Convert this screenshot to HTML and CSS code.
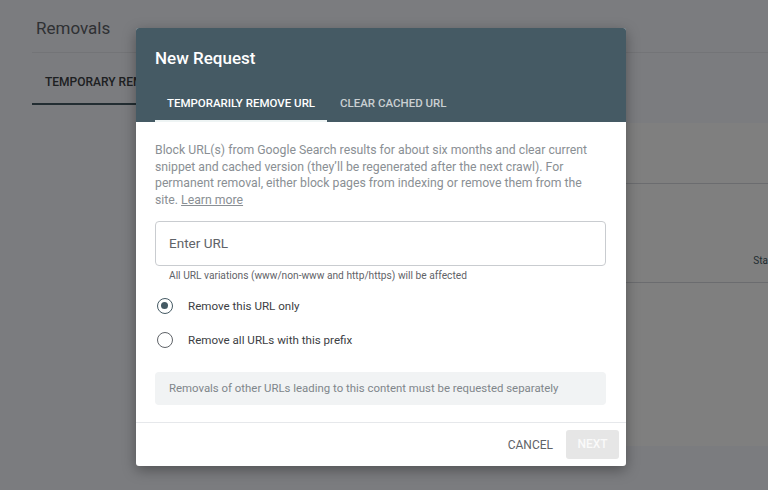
FILE: index.html
```html
<!DOCTYPE html>
<html>
<head>
<meta charset="utf-8">
<link rel="stylesheet" href="styles.css">
</head>
<body>
<div class="page">
  <div class="page-head">Removals</div>
  <div class="page-tabs">
    <div class="page-tab">TEMPORARY REMOVALS</div>
  </div>
  <div class="page-card">
    <div class="card-top"></div>
    <div class="card-row"><span class="card-cell">Sta</span></div>
    <div class="card-rest"></div>
  </div>
</div>
<div class="overlay"></div>
<div class="dialog">
  <div class="dialog-head">
    <div class="dialog-title">New Request</div>
    <div class="dialog-tabs">
      <div class="dtab active">TEMPORARILY REMOVE URL</div>
      <div class="dtab">CLEAR CACHED URL</div>
    </div>
  </div>
  <div class="dialog-body">
    <p class="desc">Block URL(s) from Google Search results for about six months and clear current snippet and cached version (they’ll be regenerated after the next crawl). For permanent removal, either block pages from indexing or remove them from the site. <span class="link">Learn more</span></p>
    <div class="input">Enter URL</div>
    <div class="helper">All URL variations (www/non-www and http/https) will be affected</div>
    <div class="radios">
      <div class="radio-row"><span class="radio checked"></span><span class="radio-label">Remove this URL only</span></div>
      <div class="radio-row"><span class="radio"></span><span class="radio-label">Remove all URLs with this prefix</span></div>
    </div>
    <div class="note">Removals of other URLs leading to this content must be requested separately</div>
  </div>
  <div class="dialog-foot">
    <span class="btn-text">CANCEL</span>
    <span class="btn-next">NEXT</span>
  </div>
</div>
</body>
</html>
```
FILE: styles.css
```css
html, body {
  margin: 0;
  padding: 0;
  width: 768px;
  height: 490px;
  overflow: hidden;
  font-family: Roboto, "Liberation Sans", sans-serif;
}
body {
  background: #f6f8ff;
  position: relative;
}
.page {
  height: 490px;
}
.page-head {
  height: 53px;
  box-sizing: border-box;
  padding: 18px 0 0 4px;
  margin-left: 32px;
  font-size: 17px;
  color: #5f6368;
  border-bottom: 1px solid #e6e8ee;
}
.page-tabs {
  display: flex;
  margin-left: 32px;
  height: 52px;
}
.page-tab {
  width: 104px;
  padding: 6px 0 0 13px;
  box-sizing: border-box;
  white-space: nowrap;
  font-size: 12px;
  font-weight: 500;
  color: #3c4043;
  line-height: 46px;
  border-bottom: 2px solid #455a64;
}
.page-card {
  margin: 18px 0 0 160px;
  background: #fff;
  height: 323px;
}
.card-top {
  height: 60px;
  border-bottom: 1px solid #d6d9de;
}
.card-row {
  height: 98px;
  border-bottom: 1px solid #d6d9de;
  display: flex;
  justify-content: flex-end;
  align-items: flex-end;
}
.card-cell {
  font-size: 10px;
  color: #455a64;
  margin: 0 0 16px 0;
}
.overlay {
  position: absolute;
  inset: 0;
  background: rgba(0, 0, 0, 0.5);
}
.dialog {
  position: absolute;
  left: 136px;
  top: 28px;
  width: 490px;
  height: 438px;
  background: #fff;
  border-radius: 3px;
  box-shadow: 0 4px 14px rgba(0, 0, 0, 0.35);
  overflow: hidden;
  display: flex;
  flex-direction: column;
}
.dialog-head {
  background: #455a64;
  height: 94px;
  padding: 0 19px;
  box-sizing: border-box;
}
.dialog-title {
  padding-top: 20px;
  height: 46px;
  box-sizing: border-box;
  font-size: 17px;
  font-weight: 500;
  color: #fff;
  line-height: 20px;
}
.dialog-tabs {
  display: flex;
  height: 48px;
}
.dtab {
  height: 48px;
  line-height: 58px;
  box-sizing: border-box;
  padding: 0 13px;
  font-size: 11.5px;
  font-weight: 500;
  color: rgba(255, 255, 255, 0.72);
}
.dtab.active {
  color: #fff;
  border-bottom: 2px solid #eef4f4;
  width: 172px;
  text-align: center;
  padding: 0;
}
.dialog-body {
  padding: 20px 20px 0 19px;
  flex: 1;
  border-bottom: 1px solid #e6e8eb;
}
.desc {
  margin: 0;
  font-size: 12.25px;
  line-height: 16.5px;
  color: #8a8f94;
}
.link {
  text-decoration: underline;
}
.input {
  margin-top: 13px;
  height: 45px;
  box-sizing: border-box;
  border: 1px solid #c9ccd0;
  border-radius: 4px;
  padding-left: 13px;
  line-height: 43px;
  font-size: 13.5px;
  color: #5f6368;
}
.helper {
  margin: 3px 0 0 14px;
  font-size: 10.2px;
  line-height: 14px;
  color: #5f6368;
}
.radios {
  margin-top: 6px;
}
.radio-row {
  height: 34px;
  display: flex;
  align-items: center;
}
.radio {
  width: 16px;
  height: 16px;
  box-sizing: border-box;
  border: 1.5px solid #5f6368;
  border-radius: 50%;
  margin-left: 2px;
  position: relative;
}
.radio.checked {
  border-color: #455a64;
}
.radio.checked::after {
  content: "";
  position: absolute;
  left: 3px;
  top: 3px;
  width: 7px;
  height: 7px;
  border-radius: 50%;
  background: #455a64;
}
.radio-label {
  margin-left: 15px;
  font-size: 11.6px;
  color: #3c4043;
}
.note {
  margin-top: 15px;
  height: 33px;
  background: #f1f3f4;
  border-radius: 4px;
  padding-left: 14px;
  line-height: 33px;
  font-size: 11.4px;
  color: #80868b;
}
.dialog-foot {
  height: 43px;
  display: flex;
  justify-content: flex-end;
  align-items: center;
  padding-right: 7px;
}
.btn-text {
  font-size: 12px;
  font-weight: 400;
  color: #5f6368;
  margin-right: 13px;
}
.btn-next {
  width: 53px;
  height: 29px;
  line-height: 29px;
  text-align: center;
  background: #e6e6e6;
  border-radius: 3px;
  font-size: 12px;
  font-weight: 500;
  color: #fafafa;
}
```
